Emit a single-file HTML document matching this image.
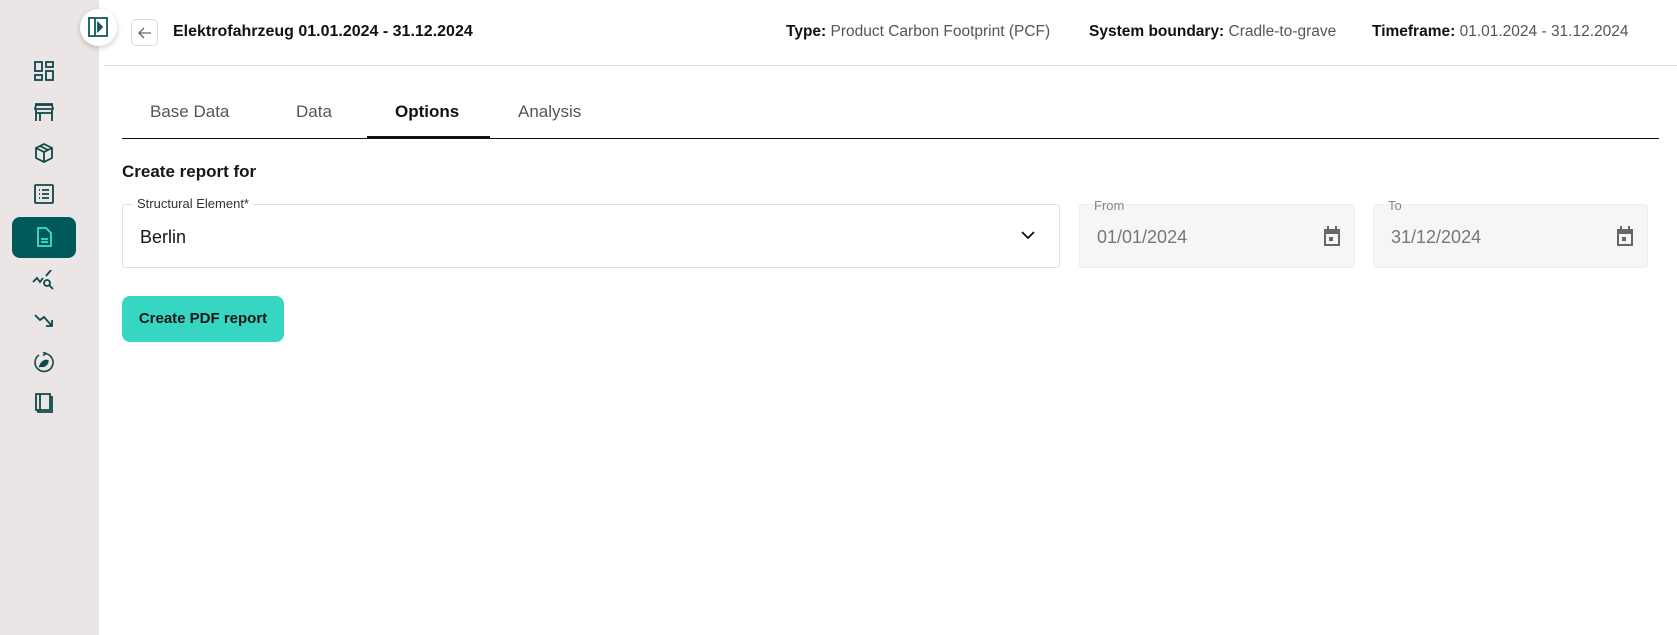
<!DOCTYPE html>
<html><head><meta charset="utf-8"><style>
*{box-sizing:border-box;margin:0;padding:0}
body{width:1677px;height:635px;overflow:hidden;background:#fff;font-family:"Liberation Sans",sans-serif;color:#161616;position:relative}
.side{position:absolute;left:0;top:0;width:99px;height:635px;background:#ebe5e5}
.ic{position:absolute;left:34px;width:20px;height:20px}
.act{position:absolute;left:12px;top:217px;width:64px;height:41px;background:#005a5a;border-radius:8px}
.tog{position:absolute;left:80px;top:9px;width:37px;height:37px;border-radius:50%;background:#fff;box-shadow:0 2px 6px rgba(0,0,0,.2)}
.back{position:absolute;left:131px;top:19px;width:27px;height:27px;border:1px solid #ddd;border-radius:5px}
.title{position:absolute;left:173px;top:23px;font-size:16px;font-weight:bold;color:#111}
.meta{position:absolute;top:23px;font-size:15.5px;color:#555;white-space:nowrap}
.meta b{color:#111}
.hl{position:absolute;left:104px;top:65px;right:0;height:1px;background:#ddd}
.tab{position:absolute;top:102px;font-size:17px;color:#555}
.tl{position:absolute;left:122px;top:138px;width:1537px;height:1px;background:#111}
.tu{position:absolute;left:367px;top:136px;width:123px;height:3px;background:#111}
h2{position:absolute;left:122px;top:162px;font-size:17px;font-weight:bold}
.f{position:absolute;top:204px;height:64px;border:1px solid #e2e2e2;border-radius:3px}
.lab{position:absolute;top:-9px;left:10px;padding:0 4px;background:#fff;font-size:13px;color:#333}
.val{position:absolute;left:17px;top:22px;font-size:18px}
.dis{background:#f7f6f5;border-color:#eee}
.dis .lab{background:transparent;color:#888;top:-7px}
.dis .val{color:#777}
.btn{position:absolute;left:122px;top:296px;width:162px;height:46px;background:#36d6c3;border-radius:8px;font-size:15px;font-weight:bold;text-align:center;line-height:46px}
</style></head><body>
<div class="side">
<div class="act"></div>
<svg class="ic" style="top:61px" viewBox="0 0 20 20" fill="none" stroke="#0e4848" stroke-width="1.8"><rect x="1" y="1" width="7" height="9"/><rect x="12" y="1" width="7" height="5"/><rect x="1" y="14" width="7" height="5"/><rect x="12" y="10" width="7" height="9"/></svg>
<svg class="ic" style="top:102px" viewBox="0 0 20 20" fill="none" stroke="#0e4848" stroke-width="1.8"><path d="M1 2h18M1 7h18l-1-4H2zM2 8v11M18 8v11M2 11h16M6 11v8"/></svg>
<svg class="ic" style="top:143px" viewBox="0 0 20 20" fill="none" stroke="#0e4848" stroke-width="1.8"><path d="M10 1l8 4v10l-8 4-8-4V5zM2 5l8 4 8-4M10 9v10M6 3l8 4"/></svg>
<svg class="ic" style="top:184px" viewBox="0 0 20 20" fill="none" stroke="#0e4848" stroke-width="1.8"><rect x="1" y="1" width="18" height="18" rx="1"/><path d="M5 6h1M5 10h1M5 14h1M8 6h7M8 10h7M8 14h7"/></svg>
<svg class="ic" style="top:227px" viewBox="0 0 20 20" fill="none" stroke="#3de0c8" stroke-width="1.8"><path d="M4 1h8l5 5v13H4zM7 12h7M7 15h7"/></svg>
<svg class="ic" style="top:270px;left:32px;width:24px" viewBox="0 0 24 20" fill="none" stroke="#0e4848" stroke-width="1.8"><path d="M1 12l4-4 3 4 3-4M14 6l5-6"/><circle cx="15" cy="13" r="3"/><path d="M17 15l4 4"/></svg>
<svg class="ic" style="top:310px" viewBox="0 0 20 20" fill="none" stroke="#0e4848" stroke-width="1.8"><path d="M1 5l5 5 4-3 8 9M12 16h6v-6"/></svg>
<svg class="ic" style="top:352px;width:22px;height:22px;left:33px" viewBox="0 0 22 22" fill="none" stroke="#0e4848" stroke-width="1.6"><path d="M6 3a9 9 0 1 0 6-1.5M10 0l3 1.5-3 2"/><path d="M7 14c2-6 7-6 8-5-1 5-5 6-8 5zM6 15l3-2" fill="#0e4848"/></svg>
<svg class="ic" style="top:393px" viewBox="0 0 20 20" fill="none" stroke="#0e4848" stroke-width="1.8"><path d="M2 1h14v16H2zM6 1v16M16 4h2v15H4v-2"/></svg>
</div>
<div class="tog"><svg style="position:absolute;left:8px;top:8px" width="20" height="20" viewBox="0 0 20 20" fill="none" stroke="#0e5a5a" stroke-width="1.8"><rect x="1" y="1" width="18" height="18"/><path d="M7 1v18"/><path d="M10 6l4 4-4 4z" fill="#0e5a5a"/></svg></div>
<div class="back"><svg style="position:absolute;left:6px;top:6px" width="14" height="14" viewBox="0 0 14 14" fill="none" stroke="#666" stroke-width="1.3"><path d="M13 7H1M6 2L1 7l5 5"/></svg></div>
<div class="title">Elektrofahrzeug 01.01.2024 - 31.12.2024</div>
<div class="meta" style="left:786px"><b>Type:</b> Product Carbon Footprint (PCF)</div>
<div class="meta" style="left:1089px"><b>System boundary:</b> Cradle-to-grave</div>
<div class="meta" style="left:1372px"><b>Timeframe:</b> 01.01.2024 - 31.12.2024</div>
<div class="hl"></div>
<div class="tab" style="left:150px">Base Data</div>
<div class="tab" style="left:296px">Data</div>
<div class="tab" style="left:395px;color:#111;font-weight:bold">Options</div>
<div class="tab" style="left:518px">Analysis</div>
<div class="tl"></div><div class="tu"></div>
<h2>Create report for</h2>
<div class="f" style="left:122px;width:938px"><div class="lab">Structural Element*</div><div class="val">Berlin</div>
<svg style="position:absolute;right:24px;top:25px" width="14" height="10" viewBox="0 0 14 10" fill="none" stroke="#111" stroke-width="1.8"><path d="M1 2l6 6 6-6"/></svg></div>
<div class="f dis" style="left:1079px;width:276px"><div class="lab">From</div><div class="val">01/01/2024</div>
<svg style="position:absolute;right:13px;top:20px" width="18" height="22" viewBox="0 0 18 22" fill="#666"><path d="M1 4h16v17H1z"/><rect x="4" y="1" width="2" height="4"/><rect x="12" y="1" width="2" height="4"/><rect x="3" y="9" width="12" height="10" fill="#f7f6f5"/><rect x="6" y="12" width="4" height="4"/></svg></div>
<div class="f dis" style="left:1373px;width:275px"><div class="lab">To</div><div class="val">31/12/2024</div>
<svg style="position:absolute;right:13px;top:20px" width="18" height="22" viewBox="0 0 18 22" fill="#666"><path d="M1 4h16v17H1z"/><rect x="4" y="1" width="2" height="4"/><rect x="12" y="1" width="2" height="4"/><rect x="3" y="9" width="12" height="10" fill="#f7f6f5"/><rect x="6" y="12" width="4" height="4"/></svg></div>
<div class="btn">Create PDF report</div>
</body></html>
